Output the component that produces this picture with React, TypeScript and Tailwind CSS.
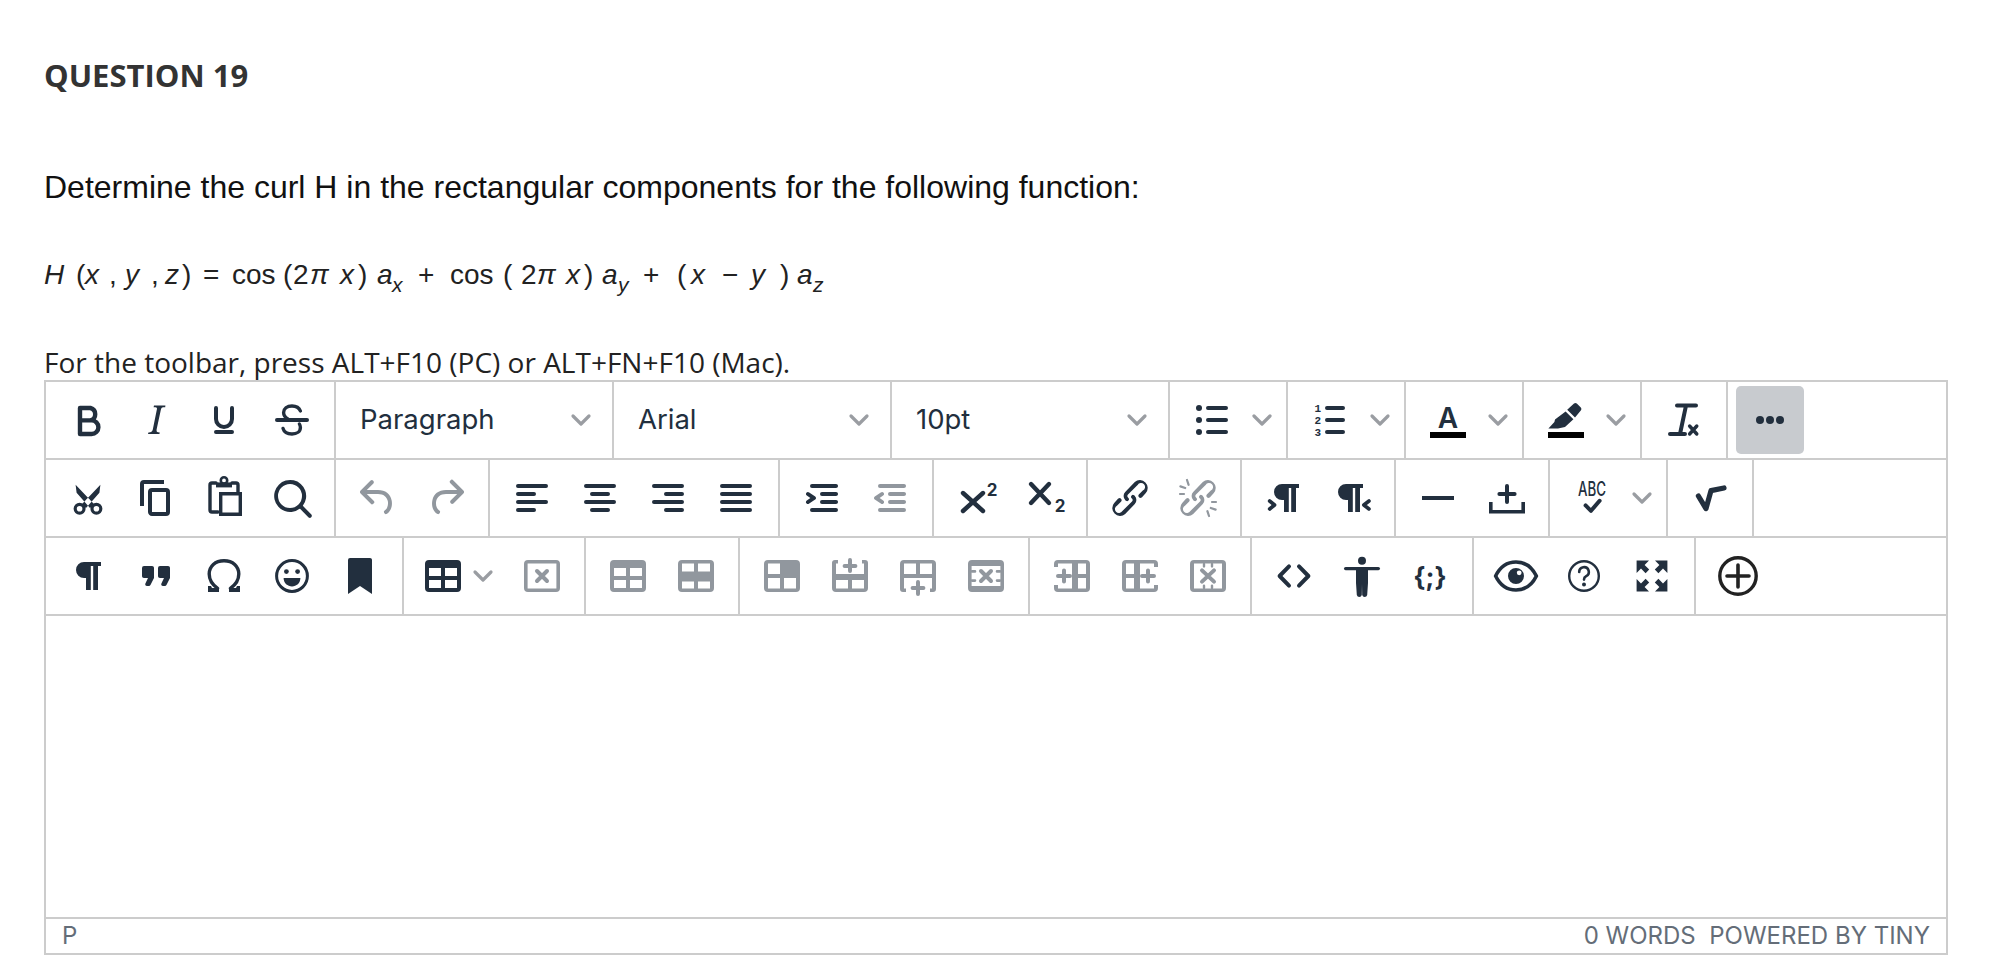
import type { ReactNode } from 'react';

const frame = 'M5 4h14a2 2 0 0 1 2 2v12a2 2 0 0 1-2 2H5a2 2 0 0 1-2-2V6a2 2 0 0 1 2-2z';
const linkPath =
  'M6.2 12.3a1 1 0 0 1 1.4 1.4l-2 2a2 2 0 1 0 2.6 2.8l4.8-4.8a1 1 0 0 0 0-1.4 1 1 0 1 1 1.4-1.3 2.9 2.9 0 0 1 0 4L9.6 20a3.9 3.9 0 0 1-5.5-5.5l2-2.2zm11.6-.6a1 1 0 0 1-1.4-1.4l2-2a2 2 0 1 0-2.6-2.8L11 10.3a1 1 0 0 0 0 1.4A1 1 0 1 1 9.6 13a2.9 2.9 0 0 1 0-4L14.4 4a3.9 3.9 0 0 1 5.5 5.5l-2 2.2z';

const Cut = (d: string) => <path fillRule="evenodd" d={d} />;
const Line = (d: string, w = 2) => (
  <path d={d} fill="none" stroke="currentColor" strokeWidth={w} strokeLinecap="round" strokeLinejoin="round" />
);
const Bars = (rows: number[][]) => (
  <path d={rows.map(([x, y, w]) => `M${x} ${y}h${w}`).join('')} fill="none" stroke="currentColor" strokeWidth={2} strokeLinecap="round" />
);
const Pil = <path d="M10 5h8.5v2H17v12h-2.4V7h-1.2v12H11v-6h-1a4 4 0 0 1 0-8z" />;
const digit = { fontSize: 5.5, fontWeight: 700, fontFamily: 'Liberation Mono, monospace' };

const icons: Record<string, ReactNode> = {
  bold: Line('M8 6h5.2a3.2 3.2 0 0 1 0 6.2H8zM8 12.2h5.8a3.4 3.4 0 0 1 0 6.8H8z', 2.2),
  italic: <path d="M16.7 4.7l-.1.9h-.3c-.6 0-1 0-1.4.3-.3.3-.4.6-.5 1.1l-2.1 9.8v.6c0 .5.4.8 1.4.8h.2l-.2.8H8l.2-.8h.2c1.1 0 1.8-.5 2-1.5l2-9.8.1-.5c0-.6-.4-.8-1.4-.8h-.3l.2-.9h5.8z" />,
  underline: Line('M8 6v5.5a4 4 0 0 0 8 0V6M8 18h8', 2),
  strike: (
    <>
      {Line('M16.2 7.5C15.6 5.9 14 5 12 5 9.5 5 7.8 6.3 7.8 8.3c0 1.4.8 2.5 2.2 3.2M15.7 14c.3.5.5 1 .5 1.7 0 2-1.8 3.3-4.2 3.3-2.2 0-4-1-4.5-2.8', 1.7)}
      {Line('M4.5 12h15')}
    </>
  ),
  bullist: (
    <>
      <circle cx="5.5" cy="6" r="1.5" />
      <circle cx="5.5" cy="12" r="1.5" />
      <circle cx="5.5" cy="18" r="1.5" />
      {Bars([[10, 6, 9], [10, 12, 9], [10, 18, 9]])}
    </>
  ),
  numlist: (
    <>
      <text x="4.2" y="8" {...digit}>1</text>
      <text x="4.2" y="14" {...digit}>2</text>
      <text x="4.2" y="20" {...digit}>3</text>
      {Bars([[10.5, 6, 8], [10.5, 12, 8], [10.5, 18, 8]])}
    </>
  ),
  forecolor: (
    <>
      <text x="12" y="16" textAnchor="middle" fontSize="14" fontWeight="600" fontFamily="Inter, sans-serif">A</text>
      <rect x="3" y="18" width="18" height="3" fill="#000" />
    </>
  ),
  backcolor: (
    <>
      <path d="M12.6 6.9L16 3.8a1 1 0 0 1 1.4 0l2 2a1 1 0 0 1 0 1.4l-2.9 3.6zM11.8 7.7l3.9 3.9-4.2 3.9-3.5.7H3.2l3-3.2.3-1.2z" />
      <rect x="3" y="18" width="18" height="3" fill="#000" />
    </>
  ),
  removeformat: (
    <>
      {Line('M8.5 4.8h9.5M13 4.8L10 19M5 19h7.5', 2)}
      {Line('M14.8 15l3.6 4M18.4 15l-3.6 4', 1.7)}
    </>
  ),
  more: (
    <>
      <circle cx="7" cy="12" r="2" />
      <circle cx="12" cy="12" r="2" />
      <circle cx="17" cy="12" r="2" />
    </>
  ),
  cut: (
    <>
      <path d="M5.8 5.4l9.4 9.9-2.2 1.7L6.3 9.4zM18.2 5.4l-9.4 9.9 2.2 1.7 6.7-7.6z" />
      <circle cx="7.8" cy="17.4" r="2.2" fill="none" stroke="currentColor" strokeWidth="1.6" />
      <circle cx="16.2" cy="17.4" r="2.2" fill="none" stroke="currentColor" strokeWidth="1.6" />
      <circle cx="12" cy="13.2" r=".8" fill="#fff" />
    </>
  ),
  copy: <path d="M16 3H6a2 2 0 0 0-2 2v11h2V5h10V3zm1 4h-7a2 2 0 0 0-2 2v10c0 1.1.9 2 2 2h7a2 2 0 0 0 2-2V9a2 2 0 0 0-2-2zm0 12h-7V9h7v10z" fillRule="evenodd" />,
  paste: (
    <>
      {Line('M8 4.5H6a1 1 0 0 0-1 1V18a1 1 0 0 0 1 1h3M16 4.5h2a1 1 0 0 1 1 1V9', 1.7)}
      <circle cx="12" cy="3.2" r="1.6" fill="none" stroke="currentColor" strokeWidth="1.3" />
      <path d="M8 4.2h8v2.5H8z" />
      <path fillRule="evenodd" d="M9.5 9H21v12H9.5zM11.2 10.7v8.6h8.1v-8.6z" />
    </>
  ),
  search: <path d="M16 17.3a8 8 0 1 1 1.4-1.4l4.3 4.4a1 1 0 0 1-1.4 1.4l-4.4-4.4zm-5-.3a6 6 0 1 0 0-12 6 6 0 0 0 0 12z" fillRule="evenodd" />,
  undo: <path d="M6.4 8H12c3.7 0 6.2 2 6.8 5.1.6 2.7-.4 5.6-2.3 6.8a1 1 0 0 1-1-1.8c1.1-.6 1.8-2.7 1.4-4.6-.5-2.1-2.1-3.5-4.9-3.5H6.4l3.3 3.3a1 1 0 1 1-1.4 1.4l-5-5a1 1 0 0 1 0-1.4l5-5a1 1 0 0 1 1.4 1.4L6.4 8z" />,
  redo: <path d="M17.6 10H12c-2.8 0-4.4 1.4-4.9 3.5-.4 2 .3 4 1.4 4.6a1 1 0 1 1-1 1.8c-2-1.2-2.9-4.1-2.3-6.8.6-3 3-5.1 6.8-5.1h5.6l-3.3-3.3a1 1 0 1 1 1.4-1.4l5 5a1 1 0 0 1 0 1.4l-5 5a1 1 0 0 1-1.4-1.4l3.3-3.3z" />,
  alignleft: Bars([[5, 6, 14], [5, 10, 8], [5, 14, 14], [5, 18, 8]]),
  aligncenter: Bars([[5, 6, 14], [8, 10, 8], [5, 14, 14], [8, 18, 8]]),
  alignright: Bars([[5, 6, 14], [11, 10, 8], [5, 14, 14], [11, 18, 8]]),
  justify: Bars([[5, 6, 14], [5, 10, 14], [5, 14, 14], [5, 18, 14]]),
  indent: <path d="M7 5h12c.6 0 1 .4 1 1s-.4 1-1 1H7a1 1 0 1 1 0-2zm5 4h7c.6 0 1 .4 1 1s-.4 1-1 1h-7a1 1 0 0 1 0-2zm0 4h7c.6 0 1 .4 1 1s-.4 1-1 1h-7a1 1 0 0 1 0-2zm-5 4h12a1 1 0 0 1 0 2H7a1 1 0 0 1 0-2zm-2.6-3.8L6.2 12l-1.8-1.2a1 1 0 0 1 1.2-1.6l3 2a1 1 0 0 1 0 1.6l-3 2a1 1 0 1 1-1.2-1.6z" />,
  outdent: <path d="M7 5h12c.6 0 1 .4 1 1s-.4 1-1 1H7a1 1 0 1 1 0-2zm5 4h7c.6 0 1 .4 1 1s-.4 1-1 1h-7a1 1 0 0 1 0-2zm0 4h7c.6 0 1 .4 1 1s-.4 1-1 1h-7a1 1 0 0 1 0-2zm-5 4h12a1 1 0 0 1 0 2H7a1 1 0 0 1 0-2zm1.6-3.8a1 1 0 0 1-1.2 1.6l-3-2a1 1 0 0 1 0-1.6l3-2a1 1 0 0 1 1.2 1.6L6.8 12l1.8 1.2z" />,
  sup: (
    <>
      {Line('M5.5 9.5l10 9M15.5 9.5l-10 9', 2.2)}
      <text x="17.4" y="11" fontSize="8.5" fontWeight="700" fontFamily="Inter, sans-serif">2</text>
    </>
  ),
  sub: (
    <>
      {Line('M5.5 5l9 9.5M14.5 5l-9 9.5', 2.2)}
      <text x="17.4" y="19" fontSize="8.5" fontWeight="700" fontFamily="Inter, sans-serif">2</text>
    </>
  ),
  link: <path d={linkPath} />,
  unlink: (
    <>
      <path d={linkPath} />
      {Line('M6.5 3l.8 2.4M3.2 6.2l2.4.8M3 10h2M17.500 21l-.8-2.4M20.800 17.800l-2.400-.8M21 14h-2', 1.1)}
    </>
  ),
  ltr: (
    <>
      <g transform="translate(1 0)">{Pil}</g>
      {Line('M4.8 13.5l2.5 2-2.5 2', 1.8)}
    </>
  ),
  rtl: (
    <>
      <g transform="translate(-1 0)">{Pil}</g>
      {Line('M20.5 13.5l-2.6 2 2.6 2', 1.8)}
    </>
  ),
  hr: <rect x="4" y="11" width="16" height="2" />,
  pagebreak: (
    <>
      {Line('M12.5 6v8M8.7 10h7.6', 2)}
      <path d="M3.5 14h1.8v4h14.400v-4h1.800v5.800h-18z" />
    </>
  ),
  spell: (
    <>
      <text transform="translate(12 11.2) scale(.68 1)" textAnchor="middle" fontSize="9.8" fontWeight="500" fontFamily="Inter, sans-serif">ABC</text>
      {Line('M8.8 15.7l2.7 2.7 4.3-5', 2)}
    </>
  ),
  sqrt: Line('M6.2 11l3.8 6.3 2.5-9 6.5-1.3', 2.6),
  pilcrow: Pil,
  quote: <path d="M7.5 17h.9c.4 0 .7-.2.9-.6L11 13V8c0-.6-.4-1-1-1H6a1 1 0 0 0-1 1v4c0 .6.4 1 1 1h2l-1.3 2.7a1 1 0 0 0 .8 1.3zm8 0h.9c.4 0 .7-.2.9-.6L19 13V8c0-.6-.4-1-1-1h-4a1 1 0 0 0-1 1v4c0 .6.4 1 1 1h2l-1.3 2.7a1 1 0 0 0 .8 1.3z" />,
  omega: (
    <>
      {Line('M8.8 18.2C6 16.2 4.6 13.800 4.6 11c0-4 3-6.600 7.400-6.600s7.400 2.600 7.400 6.600c0 2.800-1.400 5.200-4.200 7.200', 1.7)}
      <path d="M4 17h1.5l.5 1h3.500v2H4zM20 17h-1.500l-.5 1h-3.500v2H20z" />
    </>
  ),
  emoji: (
    <>
      <circle cx="12" cy="12" r="7.7" fill="none" stroke="currentColor" strokeWidth="1.5" />
      <circle cx="9.2" cy="9.8" r="1.2" />
      <circle cx="14.8" cy="9.8" r="1.2" />
      <path d="M7.8 13h8.4c0 2.6-2 4.2-4.2 4.2S7.8 15.6 7.8 13z" />
    </>
  ),
  bookmark: <path d="M6 4v17l6-4 6 4V4c0-.6-.4-1-1-1H7a1 1 0 0 0-1 1z" />,
  table: Cut(`${frame}M5 8v4h6V8zM13 8v4h6V8zM5 14v4h6v-4zM13 14v4h6v-4z`),
  tabledelete: (
    <>
      {Cut(`${frame}M4.8 5.8v12.4h14.4V5.8z`)}
      {Line('M9.5 9.500l5 5M14.500 9.500l-5 5', 2)}
    </>
  ),
  cellprops: Cut(`${frame}M5 8v4h6V8zM13 8v4h6V8zM5 14v4h6v-4zM13 14v4h6v-4z`),
  rowprops: Cut(`${frame}M5 5.8v4h6v-4zM13 5.8v4h6v-4zM5 14.8v3.4h6v-3.4zM13 14.8v3.4h6v-3.4z`),
  merge: Cut(`${frame}M5 5.8V11h6V5.8zM5 13v5.2h6V13zM13 13v5.2h6V13z`),
  rowbefore: (
    <>
      <path fillRule="evenodd" d="M3 5.5A1.5 1.5 0 0 1 4.5 4H6v1.8H5V11h14V5.8h-1V4h1.5A1.5 1.5 0 0 1 21 5.5V18a2 2 0 0 1-2 2H5a2 2 0 0 1-2-2zM5 14v4.2h6V14zM13 14v4.2h6V14z" />
      {Line('M12 4v5.5M9.3 7h5.4', 2)}
    </>
  ),
  rowafter: (
    <>
      <path fillRule="evenodd" d="M5 4h14a2 2 0 0 1 2 2v12.500a1.500 1.500 0 0 1-1.500 1.500H18v-1.800h1V13H5v5.200h1V20H4.500A1.500 1.500 0 0 1 3 18.500V6a2 2 0 0 1 2-2zM5 5.800v5.200h6V5.800zM13 5.800v5.200h6V5.800z" />
      {Line('M12 15v6M9.3 18h5.4', 2)}
    </>
  ),
  rowdelete: (
    <>
      {Cut(`${frame}M4.8 7v10h14.4V7z`)}
      {Line('M9.5 9.500l5 5M14.500 9.500l-5 5', 2)}
      {Line('M5 9.700h1.500M5 14.300h1.500M19 9.700h-1.500M19 14.300h-1.500', 1.3)}
    </>
  ),
  colbefore: (
    <>
      <path fillRule="evenodd" d="M5 4h14a2 2 0 0 1 2 2v12a2 2 0 0 1-2 2H5a2 2 0 0 1-2-2v-1.500h2v1.700h7V5.800H5V7.500H3V6a2 2 0 0 1 2-2zM15 5.800V11h4V5.800zM15 13v5.200h4V13z" />
      {Line('M5 12h6M8 9.300v5.400', 2)}
    </>
  ),
  colafter: (
    <>
      <path fillRule="evenodd" d="M19 4H5a2 2 0 0 0-2 2v12a2 2 0 0 0 2 2h14a2 2 0 0 0 2-2v-1.500h-2v1.700h-7V5.800h7V7.500h2V6a2 2 0 0 0-2-2zM9 5.800V11H5V5.800zM9 13v5.200H5V13z" />
      {Line('M13 12h6M16 9.300v5.400', 2)}
    </>
  ),
  coldelete: (
    <>
      {Cut(`${frame}M5 5.800v12.400h14V5.800z`)}
      {Line('M9 9.200l6 5.600M15 9.200l-6 5.600', 2)}
      {Line('M10 6v1.200M14 6v1.200M10 16.800V18M14 16.800V18', 1.2)}
    </>
  ),
  source: Line('M9.5 7.200L4.800 12l4.700 4.800M14.500 7.200l4.700 4.800-4.700 4.800', 2),
  a11y: (
    <>
      <circle cx="12" cy="4.4" r="2" />
      <rect x="3" y="7.5" width="18" height="1.6" rx=".8" />
      <path d="M9 8h6v7.500l-.4 6a1.300 1.300 0 0 1-2.500 0L12 16l-.1 5.500a1.300 1.300 0 0 1-2.500 0L9 15.500z" />
    </>
  ),
  eye: (
    <>
      {Line('M1.800 12C4 7.500 7.800 5 12 5s8 2.500 10.200 7c-2.200 4.500-6 7-10.200 7s-8-2.500-10.200-7z', 1.8)}
      <path fillRule="evenodd" d="M12 8a4 4 0 1 1-4 4 4 4 0 0 1 4-4zM13.600 9.200a1.200 1.200 0 1 0 0 2.400 1.200 1.200 0 0 0 0-2.400z" />
    </>
  ),
  help: (
    <>
      <circle cx="12" cy="12" r="7.4" fill="none" stroke="currentColor" strokeWidth="1.2" />
      {Line('M9.600 10a2.400 2.400 0 1 1 3.500 2.100c-.8.400-1.100.9-1.100 1.700', 1.3)}
      <circle cx="12" cy="16.3" r="1" />
    </>
  ),
  fullscreen: <path d="M4.300 4.300h6.200L8.300 6.500l2.300 2.300-1.800 1.800-2.300-2.300-2.200 2.200zM19.700 4.300h-6.200l2.200 2.200-2.300 2.300 1.800 1.800 2.300-2.300 2.200 2.200zM4.300 19.700h6.200l-2.200-2.200 2.300-2.300-1.800-1.800-2.300 2.300-2.200-2.200zM19.700 19.700h-6.200l2.200-2.200-2.300-2.300 1.800-1.800 2.300 2.300 2.200-2.200z" />,
  plus: (
    <>
      <circle cx="12" cy="12" r="9.1" fill="none" stroke="#222" strokeWidth="1.7" />
      <path d="M12 6.500v11M6.500 12h11" fill="none" stroke="#222" strokeWidth="1.8" strokeLinecap="round" />
    </>
  ),
};

const Icon = ({ name, dim }: { name: string; dim?: boolean }) => (
  <svg
    width="48"
    height="48"
    viewBox="0 0 24 24"
    className={dim ? 'shrink-0 fill-current text-[#91979e]' : 'shrink-0 fill-current text-[#222f3e]'}
  >
    {icons[name]}
  </svg>
);

const Chevron = () => (
  <svg width="22" height="14" viewBox="0 0 22 14" className="shrink-0 text-[#9a9da2]">
    <path d="M3 3l8 8 8-8" fill="none" stroke="currentColor" strokeWidth="3.2" strokeLinecap="round" strokeLinejoin="round" />
  </svg>
);

const Btn = ({ name, dim }: { name: string; dim?: boolean }) => (
  <div className="flex h-[68px] w-[68px] items-center justify-center">
    <Icon name={name} dim={dim} />
  </div>
);

const Split = ({ name }: { name: string }) => (
  <div className="flex h-[68px] w-[100px] items-center">
    <div className="flex w-[68px] justify-center">
      <Icon name={name} />
    </div>
    <div className="flex w-[32px] justify-center">
      <Chevron />
    </div>
  </div>
);

const Select = ({ label }: { label: string }) => (
  <div className="flex h-[68px] w-[260px] items-center justify-between pl-4 pr-[12px] text-[27.5px] text-[#222f3e]">
    <span>{label}</span>
    <Chevron />
  </div>
);

const Group = ({ children }: { children: ReactNode }) => (
  <div className="flex h-full items-center border-r-2 border-[#ccc] px-2">{children}</div>
);

const Row = ({ children }: { children: ReactNode }) => (
  <div className="flex h-[78px] items-center border-b-2 border-[#ccc]">{children}</div>
);

const tokens: { t: string; w: string; i?: boolean; s?: boolean }[] = [
  { t: 'H', w: 'w-[32px]', i: true },
  { t: '(', w: 'w-[9px]' },
  { t: 'x', w: 'w-[24px]', i: true },
  { t: ',', w: 'w-[16px]' },
  { t: 'y', w: 'w-[26px]', i: true },
  { t: ',', w: 'w-[14px]' },
  { t: 'z', w: 'w-[17px]', i: true },
  { t: ')', w: 'w-[21px]' },
  { t: '=', w: 'w-[29px]' },
  { t: 'cos', w: 'w-[51px]' },
  { t: '(', w: 'w-[10px]' },
  { t: '2', w: 'w-[17px]' },
  { t: 'π', w: 'w-[30px]', i: true },
  { t: 'x', w: 'w-[18px]', i: true },
  { t: ')', w: 'w-[19px]' },
  { t: 'a', w: 'w-[15px]', i: true },
  { t: 'x', w: 'w-[26px]', s: true },
  { t: '+', w: 'w-[32px]' },
  { t: 'cos', w: 'w-[53px]' },
  { t: '(', w: 'w-[18px]' },
  { t: '2', w: 'w-[16px]' },
  { t: 'π', w: 'w-[29px]', i: true },
  { t: 'x', w: 'w-[18px]', i: true },
  { t: ')', w: 'w-[18px]' },
  { t: 'a', w: 'w-[16px]', i: true },
  { t: 'y', w: 'w-[25px]', s: true },
  { t: '+', w: 'w-[34px]' },
  { t: '(', w: 'w-[14px]' },
  { t: 'x', w: 'w-[31px]', i: true },
  { t: '−', w: 'w-[29px]' },
  { t: 'y', w: 'w-[29px]', i: true },
  { t: ')', w: 'w-[17px]' },
  { t: 'a', w: 'w-[16px]', i: true },
  { t: 'z', w: 'w-[14px]', s: true },
];

export default function App() {
  return (
    <div className="h-[966px] overflow-hidden bg-white pl-[44px] pr-[42px] pt-[56px] font-['Open_Sans',sans-serif]">
      <h2 className="text-[31px] font-bold leading-[38px] text-[#333]">QUESTION 19</h2>

      <p className="mt-[73px] font-['Liberation_Sans',Arial,sans-serif] text-[32px] leading-[40px] text-[#111]">
        Determine the curl H in the rectangular components for the following function:
      </p>

      <p className="mt-[48px] flex items-baseline font-['Liberation_Sans',Arial,sans-serif] text-[28px] leading-[40px] text-[#222]">
        {tokens.map((k, n) => (
          <span
            key={n}
            className={`${k.w} ${k.i ? 'italic' : ''} ${k.s ? 'translate-y-[8px] text-[21px] italic' : ''}`}
          >
            {k.t}
          </span>
        ))}
      </p>

      <p className="mt-[47px] text-[28px] leading-[36px] text-[#222]">
        For the toolbar, press ALT+F10 (PC) or ALT+FN+F10 (Mac).
      </p>

      <div className="mt-0 border-2 border-[#ccc] font-['Inter',sans-serif]">
        <Row>
          <Group>
            <Btn name="bold" />
            <Btn name="italic" />
            <Btn name="underline" />
            <Btn name="strike" />
          </Group>
          <Group>
            <Select label="Paragraph" />
          </Group>
          <Group>
            <Select label="Arial" />
          </Group>
          <Group>
            <Select label="10pt" />
          </Group>
          <Group>
            <Split name="bullist" />
          </Group>
          <Group>
            <Split name="numlist" />
          </Group>
          <Group>
            <Split name="forecolor" />
          </Group>
          <Group>
            <Split name="backcolor" />
          </Group>
          <Group>
            <Btn name="removeformat" />
          </Group>
          <div className="ml-2 flex h-[68px] w-[68px] items-center justify-center rounded-[5px] bg-[#c8cbcf]">
            <Icon name="more" />
          </div>
        </Row>

        <Row>
          <Group>
            <Btn name="cut" />
            <Btn name="copy" />
            <Btn name="paste" />
            <Btn name="search" />
          </Group>
          <Group>
            <Btn name="undo" dim />
            <Btn name="redo" dim />
          </Group>
          <Group>
            <Btn name="alignleft" />
            <Btn name="aligncenter" />
            <Btn name="alignright" />
            <Btn name="justify" />
          </Group>
          <Group>
            <Btn name="indent" />
            <Btn name="outdent" dim />
          </Group>
          <Group>
            <Btn name="sup" />
            <Btn name="sub" />
          </Group>
          <Group>
            <Btn name="link" />
            <Btn name="unlink" dim />
          </Group>
          <Group>
            <Btn name="ltr" />
            <Btn name="rtl" />
          </Group>
          <Group>
            <Btn name="hr" />
            <Btn name="pagebreak" />
          </Group>
          <Group>
            <Split name="spell" />
          </Group>
          <Group>
            <Btn name="sqrt" />
          </Group>
        </Row>

        <Row>
          <Group>
            <Btn name="pilcrow" />
            <Btn name="quote" />
            <Btn name="omega" />
            <Btn name="emoji" />
            <Btn name="bookmark" />
          </Group>
          <Group>
            <div className="flex h-[68px] w-[96px] items-center">
              <div className="flex w-[62px] justify-center">
                <Icon name="table" />
              </div>
              <div className="flex w-[18px] justify-center">
                <Chevron />
              </div>
            </div>
            <Btn name="tabledelete" dim />
          </Group>
          <Group>
            <Btn name="cellprops" dim />
            <Btn name="rowprops" dim />
          </Group>
          <Group>
            <Btn name="merge" dim />
            <Btn name="rowbefore" dim />
            <Btn name="rowafter" dim />
            <Btn name="rowdelete" dim />
          </Group>
          <Group>
            <Btn name="colbefore" dim />
            <Btn name="colafter" dim />
            <Btn name="coldelete" dim />
          </Group>
          <Group>
            <Btn name="source" />
            <Btn name="a11y" />
            <div className="flex h-[68px] w-[68px] items-center justify-center text-[26px] font-bold text-[#222f3e]">
              {'{;}'}
            </div>
          </Group>
          <Group>
            <Btn name="eye" />
            <Btn name="help" />
            <Btn name="fullscreen" />
          </Group>
          <div className="flex px-2">
            <Btn name="plus" />
          </div>
        </Row>

        <div className="h-[301px]" />

        <div className="flex h-[36px] items-center justify-between border-t-2 border-[#ccc] pl-[16px] pr-[16px] text-[24px] text-[#646d78]">
          <span>P</span>
          <span className="whitespace-pre">0 WORDS  POWERED BY TINY</span>
        </div>
      </div>
    </div>
  );
}
